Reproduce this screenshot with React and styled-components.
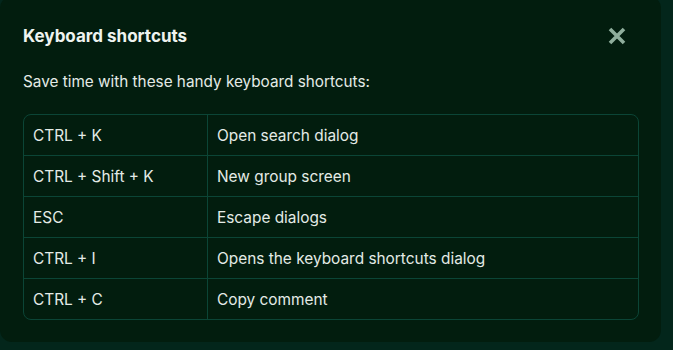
import React from "react";
import styled, { createGlobalStyle } from "styled-components";

const GlobalStyle = createGlobalStyle`
  html, body {
    margin: 0;
    padding: 0;
    background: #03261b;
    font-family: Inter, "Liberation Sans", sans-serif;
    overflow: hidden;
  }
`;

const shortcuts = [
  { keys: "CTRL + K", action: "Open search dialog" },
  { keys: "CTRL + Shift + K", action: "New group screen" },
  { keys: "ESC", action: "Escape dialogs" },
  { keys: "CTRL + I", action: "Opens the keyboard shortcuts dialog" },
  { keys: "CTRL + C", action: "Copy comment" },
];

const Page = styled.div`
  width: 673px;
  height: 350px;
`;

const Dialog = styled.div`
  width: 661px;
  margin-top: -4px;
  box-sizing: border-box;
  padding: 24px 22px 22px 23px;
  background: #021d0e;
  border-radius: 12px;
  color: #e4ebe6;
`;

const Header = styled.div`
  display: flex;
  align-items: center;
  justify-content: space-between;
  height: 32px;
  padding-right: 12px;
`;

const Title = styled.h2`
  margin: 0;
  font-size: 17px;
  font-weight: 700;
  color: #eef3ef;
`;

const CloseButton = styled.button`
  display: flex;
  align-items: center;
  justify-content: center;
  width: 20px;
  height: 20px;
  padding: 0;
  border: none;
  background: none;
  cursor: pointer;
`;

const Intro = styled.p`
  margin: 19px 0 0;
  font-size: 15.3px;
  line-height: 22px;
`;

const Table = styled.div`
  margin-top: 21px;
  border: 1px solid #0b4536;
  border-radius: 8px;
  overflow: hidden;
`;

const Row = styled.div`
  display: grid;
  grid-template-columns: 183px 1fr;
  height: 40px;
  border-top: ${(props) => (props.first ? "none" : "1px solid #0b4536")};
`;

const Cell = styled.div`
  display: flex;
  align-items: center;
  padding: 0 9px;
  font-size: 15.4px;
  border-left: ${(props) => (props.divider ? "1px solid #0b4536" : "none")};
`;

const CloseIcon = () => (
  <svg width="18" height="18" viewBox="0 0 18 18">
    <path d="M2 2 L16 16 M16 2 L2 16" stroke="#8fae9c" strokeWidth="3.6" />
  </svg>
);

const App = () => {
  return (
    <Page>
      <GlobalStyle />
      <Dialog>
        <Header>
          <Title>Keyboard shortcuts</Title>
          <CloseButton aria-label="Close">
            <CloseIcon />
          </CloseButton>
        </Header>
        <Intro>Save time with these handy keyboard shortcuts:</Intro>
        <Table>
          {shortcuts.map((s, i) => (
            <Row key={s.keys} first={i === 0}>
              <Cell>{s.keys}</Cell>
              <Cell divider>{s.action}</Cell>
            </Row>
          ))}
        </Table>
      </Dialog>
    </Page>
  );
};

export default App;
